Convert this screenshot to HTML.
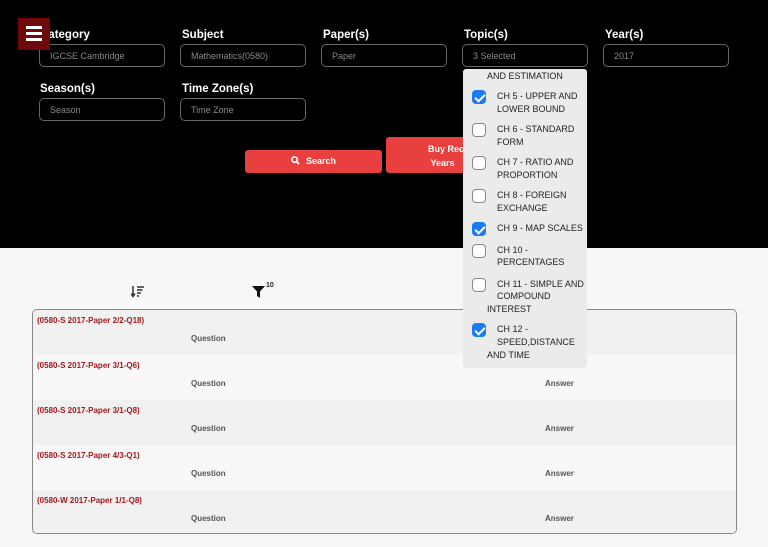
<!DOCTYPE html>
<html><head><meta charset="utf-8"><style>
*{margin:0;padding:0;box-sizing:border-box}
body{width:768px;height:547px;overflow:hidden;background:#f7f7f7;font-family:"Liberation Sans",Arial,sans-serif;position:relative}
.top{position:absolute;left:0;top:0;width:768px;height:248px;background:#000}
.lbl{position:absolute;color:#fff;font-weight:bold;font-size:11.5px}
.inp{position:absolute;border:1px solid #666;border-radius:5px;height:23px;color:#888;font-size:9px;padding:6px 10px}
.btn{position:absolute;background:#e8403e;color:#fff;font-weight:bold;font-size:9px;border-radius:3px;text-align:center}
.menu{position:absolute;left:18px;top:18px;width:32px;height:32px;background:#6e0a0a}
.menu i{position:absolute;left:8px;width:16px;height:3px;background:#fff}
.tbl{position:absolute;left:32px;top:309px;width:705px;height:225px;border:1px solid #888;border-radius:5px;overflow:hidden}
.row{height:45px;position:relative}
.row:nth-child(odd){background:#f1f1f1}.row:nth-child(even){background:#f8f8f8}
.t{position:absolute;left:4px;top:6px;color:#a3181b;font-weight:bold;font-size:8px}
.q{position:absolute;left:158px;top:24px;color:#555;font-weight:bold;font-size:8px}
.a{position:absolute;left:512px;top:24px;color:#555;font-weight:bold;font-size:8px}
.dd{position:absolute;left:463px;top:69px;width:124px;height:299px;background:#ebebeb;border-radius:3px;font-size:9px;color:#222;line-height:13px}
.it{position:absolute;left:34px;width:92px}
.cb{position:absolute;left:9px;width:14px;height:14px;border-radius:4px;border:1px solid #888;background:#fff}
.cb.on{background:#1a7cf3;border-color:#1a7cf3}
.cb.on:after{content:"";position:absolute;left:4px;top:1px;width:4px;height:8px;border:solid #fff;border-width:0 2px 2px 0;transform:rotate(45deg)}
</style></head><body>
<div class="top"></div>
<div class="lbl" style="left:40px;top:29px">Category</div>
<div class="lbl" style="left:182px;top:29px">Subject</div>
<div class="lbl" style="left:323px;top:29px">Paper(s)</div>
<div class="lbl" style="left:464px;top:29px">Topic(s)</div>
<div class="lbl" style="left:605px;top:29px">Year(s)</div>
<div class="inp" style="left:39px;top:44px;width:126px">IGCSE Cambridge</div>
<div class="inp" style="left:180px;top:44px;width:126px">Mathematics(0580)</div>
<div class="inp" style="left:321px;top:44px;width:126px">Paper</div>
<div class="inp" style="left:462px;top:44px;width:126px">3 Selected</div>
<div class="inp" style="left:603px;top:44px;width:126px">2017</div>
<div class="lbl" style="left:40px;top:83px">Season(s)</div>
<div class="lbl" style="left:182px;top:83px">Time Zone(s)</div>
<div class="inp" style="left:39px;top:98px;width:126px">Season</div>
<div class="inp" style="left:180px;top:98px;width:126px">Time Zone</div>
<div class="btn" style="left:245px;top:150px;width:137px;height:23px;line-height:23px"><svg width="9" height="9" viewBox="0 0 10 10" style="vertical-align:-1px;margin-right:6px"><circle cx="4" cy="4" r="3" stroke="#fff" stroke-width="1.8" fill="none"/><path d="M6.2 6.2L9 9" stroke="#fff" stroke-width="2"/></svg>Search</div>
<div class="btn" style="left:386px;top:137px;width:80px;height:36px;padding-top:5px;line-height:14px;text-align:left;padding-left:42px">Buy Rec<br>&nbsp;Years</div>
<div class="menu"><i style="top:8px"></i><i style="top:14px"></i><i style="top:20px"></i></div>
<svg style="position:absolute;left:131px;top:285px" width="14" height="13" viewBox="0 0 14 13"><path d="M2 1v10M0 8.5L2 11.5 4 8.5" stroke="#333" stroke-width="1.5" fill="none"/><path d="M6 2h7M6 5h5.5M6 8h4M6 11h2" stroke="#333" stroke-width="1.5"/></svg>
<svg style="position:absolute;left:252px;top:285px" width="13" height="13" viewBox="0 0 13 13"><path d="M0 1h13L8 6.5V13L5 11V6.5z" fill="#111"/></svg>
<div style="position:absolute;left:266px;top:282px;font-size:7px;font-weight:bold;color:#222">10</div>
<div class="tbl">
<div class="row"><div class="t">(0580-S 2017-Paper 2/2-Q18)</div><div class="q">Question</div><div class="a">Answer</div></div>
<div class="row"><div class="t">(0580-S 2017-Paper 3/1-Q6)</div><div class="q">Question</div><div class="a">Answer</div></div>
<div class="row"><div class="t">(0580-S 2017-Paper 3/1-Q8)</div><div class="q">Question</div><div class="a">Answer</div></div>
<div class="row"><div class="t">(0580-S 2017-Paper 4/3-Q1)</div><div class="q">Question</div><div class="a">Answer</div></div>
<div class="row"><div class="t">(0580-W 2017-Paper 1/1-Q8)</div><div class="q">Question</div><div class="a">Answer</div></div>
</div>
<div class="dd">
<div class="it" style="left:24px;top:1px;width:100px">AND ESTIMATION</div>
<div class="cb on" style="top:21px"></div><div class="it" style="top:21px">CH 5 - UPPER AND LOWER BOUND</div>
<div class="cb" style="top:54px"></div><div class="it" style="top:54px">CH 6 - STANDARD FORM</div>
<div class="cb" style="top:87px"></div><div class="it" style="top:87px">CH 7 - RATIO AND PROPORTION</div>
<div class="cb" style="top:120px"></div><div class="it" style="top:120px">CH 8 - FOREIGN EXCHANGE</div>
<div class="cb on" style="top:153px"></div><div class="it" style="top:153px;width:95px">CH 9 - MAP SCALES</div>
<div class="cb" style="top:175px"></div><div class="it" style="top:175px;line-height:12px">CH 10 -<br>PERCENTAGES</div>
<div class="cb" style="top:209px"></div><div class="it" style="top:209px;line-height:12px;width:95px">CH 11 - SIMPLE AND<br>COMPOUND</div>
<div class="it" style="left:24px;top:234px">INTEREST</div>
<div class="cb on" style="top:254px"></div><div class="it" style="top:254px">CH 12 -<br>SPEED,DISTANCE</div>
<div class="it" style="left:24px;top:280px">AND TIME</div>
</div>
</body></html>
